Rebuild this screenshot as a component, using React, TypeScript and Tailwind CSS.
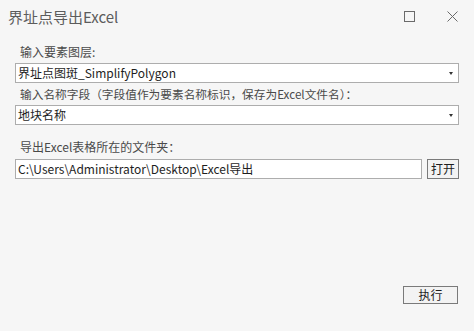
import React from "react";

const font = { fontFamily: '"Noto Sans CJK SC", "Noto Sans", sans-serif' };

function Combo({ text }: { text: string }) {
  return (
    <div className="h-[20px] w-[444px] border border-[#adadad] bg-white flex items-center justify-between pl-[2px] pr-[5px]">
      <span className="text-[12px] leading-none text-[#1e1e1e]">{text}</span>
      <span className="w-0 h-0 border-l-[2.5px] border-r-[2.5px] border-t-[3px] border-l-transparent border-r-transparent border-t-[#333]" />
    </div>
  );
}

export default function App() {
  return (
    <div className="w-[474px] h-[331px] bg-[#f6f6f6] flex flex-col" style={font}>
      <div className="h-[32px] flex items-center justify-between pl-[8px] pr-[16px] shrink-0">
        <span className="text-[15px] text-[#5c5c5c] leading-none">界址点导出Excel</span>
        <div className="flex items-center gap-[32px]">
          <svg width="11" height="11" viewBox="0 0 11 11">
            <rect x="0.5" y="0.5" width="10" height="10" fill="none" stroke="#6a6a6a" strokeWidth="1" />
          </svg>
          <svg width="11" height="11" viewBox="0 0 11 11">
            <path d="M0.5 0.5 L10.5 10.5 M10.5 0.5 L0.5 10.5" stroke="#6a6a6a" strokeWidth="1" />
          </svg>
        </div>
      </div>
      <div className="flex flex-col px-[15px] pt-[10px] flex-1">
        <div className="h-[20px] flex items-center pl-[5px] text-[12px] text-[#4a4a4a]">输入要素图层:</div>
        <div className="mt-[1px]">
          <Combo text="界址点图斑_SimplifyPolygon" />
        </div>
        <div className="h-[22px] flex items-center pl-[5px] text-[11.7px] text-[#4a4a4a] whitespace-nowrap">
          输入名称字段（字段值作为要素名称标识，保存为Excel文件名）：
        </div>
        <Combo text="地块名称" />
        <div className="mt-[12px] h-[20px] flex items-center pl-[5px] text-[12px] text-[#4a4a4a]">导出Excel表格所在的文件夹：</div>
        <div className="mt-[2px] flex items-center gap-[5px]">
          <div className="h-[20px] w-[407px] border border-[#adadad] bg-white flex items-center pl-[2px]">
            <span className="text-[12px] leading-none text-[#1e1e1e]">C:\Users\Administrator\Desktop\Excel导出</span>
          </div>
          <button className="h-[20px] w-[32px] border border-[#7a7a7a] bg-[#f3f3f3] text-[12px] text-[#1e1e1e] flex items-center justify-center leading-none">
            打开
          </button>
        </div>
        <div className="mt-auto mb-[27px] flex justify-end pr-[1px]">
          <button className="h-[18px] w-[55px] border border-[#7a7a7a] bg-[#f3f3f3] text-[12px] text-[#1e1e1e] flex items-center justify-center leading-none">
            执行
          </button>
        </div>
      </div>
    </div>
  );
}
